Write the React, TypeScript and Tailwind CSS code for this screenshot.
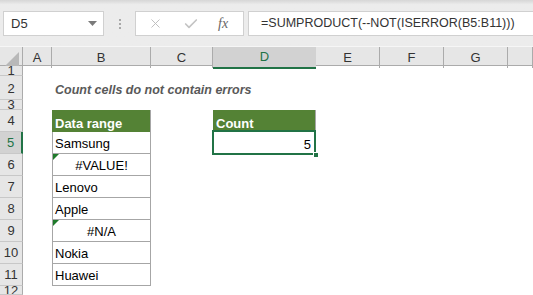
import React from 'react';
import { X, Check } from 'lucide-react';

const font = { fontFamily: '"Liberation Sans", Arial, sans-serif' };
const grid = 'grid grid-cols-[23px_29px_99px_62px_103px_64px_64px_64px_1fr]';

type RowDef = {
  n: number;
  h: string;
  lh: string;
  title?: boolean;
  head?: boolean;
  b?: string;
  d?: string;
  err?: boolean;
  sel?: boolean;
};

const rows: RowDef[] = [
  { n: 1, h: 'h-[10px]', lh: 'leading-[10px] items-start' },
  { n: 2, h: 'h-[24px]', lh: 'leading-[20px] items-end', title: true },
  { n: 3, h: 'h-[10px]', lh: 'leading-[10px] items-start' },
  { n: 4, h: 'h-[22px]', lh: 'leading-[20px] items-end', head: true, b: 'Data range', d: 'Count' },
  { n: 5, h: 'h-[22px]', lh: 'leading-[20px] items-end', b: 'Samsung', d: '5', sel: true },
  { n: 6, h: 'h-[22px]', lh: 'leading-[20px] items-end', b: '#VALUE!', err: true },
  { n: 7, h: 'h-[22px]', lh: 'leading-[20px] items-end', b: 'Lenovo' },
  { n: 8, h: 'h-[22px]', lh: 'leading-[20px] items-end', b: 'Apple' },
  { n: 9, h: 'h-[22px]', lh: 'leading-[20px] items-end', b: '#N/A', err: true },
  { n: 10, h: 'h-[22px]', lh: 'leading-[20px] items-end', b: 'Nokia' },
  { n: 11, h: 'h-[22px]', lh: 'leading-[20px] items-end', b: 'Huawei' },
  { n: 12, h: 'h-[9px]', lh: 'leading-[9px] items-start' },
];

function ErrorFlag() {
  return (
    <svg width="6" height="6" viewBox="0 0 6 6" className="absolute top-0 left-0">
      <polygon points="0,0 6,0 0,6" fill="#1f7a2b" />
    </svg>
  );
}

function SheetRow({ r }: { r: RowDef }) {
  const inTable = r.b !== undefined && !r.head;
  return (
    <div className={`${grid} ${r.h}`}>
      <div
        className={`flex justify-center overflow-hidden border-b border-[#c8c8c8] text-[13px] ${r.lh} ${
          r.sel ? 'bg-[#d2d2d2] text-[#217346] border-r-2 border-r-[#217346]' : 'bg-[#e6e6e6] text-[#333] border-r border-r-[#ababab]'
        }`}
      >
        {r.n}
      </div>
      <div />
      {r.head ? (
        <div className="flex items-end bg-[#548235] border-r border-[#a6a6a6] pl-[3px] pb-[2px] text-[13px] font-bold text-white leading-none">
          {r.b}
        </div>
      ) : inTable ? (
        <div
          className={`relative flex items-end border-x border-b border-[#a6a6a6] pb-[3px] text-[13px] text-black leading-none ${
            r.err ? 'justify-center' : 'pl-[2px]'
          }`}
        >
          {r.err && <ErrorFlag />}
          {r.b}
        </div>
      ) : r.title ? (
        <div className="relative">
          <span className="absolute left-[3px] bottom-[4px] whitespace-nowrap text-[12.5px] font-bold italic text-[#595959] leading-none">
            Count cells do not contain errors
          </span>
        </div>
      ) : (
        <div />
      )}
      <div />
      {r.head ? (
        <div className="flex items-end bg-[#548235] border-r border-[#a6a6a6] pl-[3px] pb-[2px] text-[13px] font-bold text-white leading-none">
          {r.d}
        </div>
      ) : r.sel ? (
        <div className="relative flex items-end justify-end pr-[5px] pb-[3px] text-[13px] text-black leading-none">
          {r.d}
          <div className="absolute -top-[2px] -left-px right-0 -bottom-px border-2 border-[#217346]" />
          <div className="absolute -right-[3px] -bottom-[4px] w-[6px] h-[6px] bg-[#217346] border border-white" />
        </div>
      ) : (
        <div />
      )}
      <div />
      <div />
      <div />
      <div />
    </div>
  );
}

export default function App() {
  const headers = ['A', 'B', 'C', 'D', 'E', 'F', 'G', ''];
  return (
    <div className="w-[533px] h-[295px] overflow-hidden bg-white" style={font}>
      {/* formula bar */}
      <div className="h-[47px] bg-gradient-to-b from-[#d6d6d6] via-[#ececec] via-10% to-[#ececec] flex items-start pt-[11px] pl-[3px] border-b border-[#f6f6f6]">
        <div className="w-[101px] h-[25px] bg-white border border-[#d0d0d0] flex items-center justify-between pl-[7px] pr-[6px] text-[13px] text-[#333]">
          D5
          <svg width="9" height="5" viewBox="0 0 9 5">
            <polygon points="0,0 9,0 4.5,5" fill="#7a7a7a" />
          </svg>
        </div>
        <div className="w-[31px] h-[25px] flex flex-col items-center justify-center gap-[2px]">
          <div className="w-[2px] h-[2px] bg-[#a8a8a8]" />
          <div className="w-[2px] h-[2px] bg-[#a8a8a8]" />
          <div className="w-[2px] h-[2px] bg-[#a8a8a8]" />
        </div>
        <div className="w-[109px] h-[25px] bg-white border border-[#d0d0d0] flex items-center pl-[12px]">
          <X className="w-[15px] h-[15px] text-[#bcbcbc]" strokeWidth={1.5} />
          <Check className="w-[16px] h-[16px] text-[#c4c4c4] ml-[20px]" strokeWidth={2.5} />
          <span
            className="ml-[19px] text-[14px] italic text-[#666]"
            style={{ fontFamily: '"Liberation Serif", serif' }}
          >
            fx
          </span>
        </div>
        <div className="ml-[4px] flex-1 h-[25px] bg-white border border-r-0 border-[#d0d0d0] flex items-center pl-[12px] text-[12.5px] text-[#333] whitespace-nowrap">
          =SUMPRODUCT(--NOT(ISERROR(B5:B11)))
        </div>
      </div>
      {/* column headers */}
      <div className={`${grid} h-[19px] bg-[#e6e6e6] border-b border-[#ababab]`}>
        <div className="relative border-r border-[#ababab]">
          <svg width="14" height="14" viewBox="0 0 14 14" className="absolute right-[3px] bottom-[2px]">
            <polygon points="14,0 14,14 0,14" fill="#b8b8b8" />
          </svg>
        </div>
        {headers.map((h) => (
          <div
            key={h || 'h'}
            className={`flex items-center justify-center text-[13px] ${
              h === 'D'
                ? 'bg-[#d2d2d2] text-[#217346] border-b-2 border-[#217346] -mb-px'
                : 'text-[#333] border-r border-[#ababab]'
            }`}
          >
            {h}
          </div>
        ))}
      </div>
      {rows.map((r) => (
        <SheetRow key={r.n} r={r} />
      ))}
    </div>
  );
}
